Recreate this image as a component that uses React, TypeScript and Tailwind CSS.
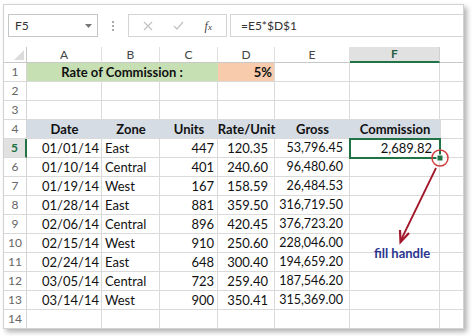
import React from "react";

const font = { fontFamily: "Lato, 'Open Sans', sans-serif" };

const data = [
  ["01/01/14", "East", "447", "120.35", "53,796.45", "2,689.82"],
  ["01/10/14", "Central", "401", "240.60", "96,480.60", ""],
  ["01/19/14", "West", "167", "158.59", "26,484.53", ""],
  ["01/28/14", "East", "881", "359.50", "316,719.50", ""],
  ["02/06/14", "Central", "896", "420.45", "376,723.20", ""],
  ["02/15/14", "West", "910", "250.60", "228,046.00", ""],
  ["02/24/14", "East", "648", "300.40", "194,659.20", ""],
  ["03/05/14", "Central", "723", "259.40", "187,546.20", ""],
  ["03/14/14", "West", "900", "350.41", "315,369.00", ""],
];

function RowHead({ n, active }: { n: number; active?: boolean }) {
  return (
    <div
      className={
        active
          ? "w-[23px] h-full flex items-center justify-center border-b border-[#dadada] border-r-2 border-r-[#217346] bg-[#e1e1e1] text-[#217346] font-bold text-[12px]"
          : "w-[23px] h-full flex items-center justify-center border-b border-r border-[#d4d4d4] border-b-[#dadada] text-[#666] text-[12px]"
      }
    >
      {n}
    </div>
  );
}

function Row({ children }: { children: React.ReactNode }) {
  return <div className="flex h-[19px] text-[13px] text-[#111] leading-none">{children}</div>;
}

const cell = "h-full flex items-center border-r border-b border-[#dadada] whitespace-nowrap";

export default function App() {
  return (
    <div className="relative w-[474px] h-[336px] bg-white overflow-hidden" style={font}>
      <div className="ml-[3px] mt-[4px] w-[461px] h-[325px] border border-[#d2d2d2] bg-white shadow-[3px_3px_5px_rgba(0,0,0,0.3)] overflow-hidden">
        {/* toolbar: name box + formula bar */}
        <div className="h-[42px] flex items-start pt-[9px] pl-[4px]">
          <div className="w-[90px] h-[23px] border border-[#c6c6c6] flex items-center justify-between pl-[6px] pr-[5px] text-[12px] text-[#333]">
            <span>F5</span>
            <svg width="7" height="4" viewBox="0 0 7 4">
              <path d="M0 0h7L3.5 4z" fill="#777" />
            </svg>
          </div>
          <div className="w-[30px] h-[23px] flex flex-col items-center justify-center gap-[2px]">
            <span className="w-[2px] h-[2px] bg-[#aaa]" />
            <span className="w-[2px] h-[2px] bg-[#aaa]" />
            <span className="w-[2px] h-[2px] bg-[#aaa]" />
          </div>
          <div className="w-[99px] h-[23px] border border-[#d4d4d4] flex items-center justify-around px-[4px]">
            <svg width="10" height="10" viewBox="0 0 10 10">
              <path d="M1 1l8 8M9 1l-8 8" stroke="#c4c4c4" strokeWidth="1.3" />
            </svg>
            <svg width="11" height="9" viewBox="0 0 11 9">
              <path d="M1 5l3 3 6-7" stroke="#c4c4c4" strokeWidth="1.3" fill="none" />
            </svg>
            <span className="italic text-[12px] text-[#444]" style={{ fontFamily: "'Liberation Serif', serif" }}>
              f<span className="text-[9px]">x</span>
            </span>
          </div>
          <div className="ml-[3px] flex-1 h-[23px] border-y border-l border-[#d4d4d4] flex items-center pl-[10px] text-[12px] text-[#333]">
            =E5*$D$1
          </div>
        </div>

        {/* column headers */}
        <div className="flex h-[16px] text-[12px] text-[#444] leading-none">
          <div className="w-[23px] h-full border-r border-b border-[#c8c8c8] flex items-end justify-end pr-[2px] pb-[2px]">
            <svg width="10" height="10" viewBox="0 0 10 10">
              <path d="M10 0V10H0z" fill="#dcdcdc" />
            </svg>
          </div>
          <div className="w-[75px] h-full flex items-center justify-center border-r border-[#e0e0e0] border-b border-b-[#c8c8c8]">A</div>
          <div className="w-[58px] h-full flex items-center justify-center border-r border-[#e0e0e0] border-b border-b-[#c8c8c8]">B</div>
          <div className="w-[58px] h-full flex items-center justify-center border-r border-[#e0e0e0] border-b border-b-[#c8c8c8]">C</div>
          <div className="w-[57px] h-full flex items-center justify-center border-r border-[#e0e0e0] border-b border-b-[#c8c8c8]">D</div>
          <div className="w-[75px] h-full flex items-center justify-center border-r border-[#e0e0e0] border-b border-b-[#c8c8c8]">E</div>
          <div className="w-[90px] h-full flex items-center justify-center bg-[#e1e1e1] border-r border-[#d0d0d0] border-b-2 border-b-[#217346] font-bold text-[#2b5d43]">F</div>
          <div className="flex-1 h-full border-b border-[#c8c8c8]" />
        </div>

        {/* row 1 */}
        <Row>
          <RowHead n={1} />
          <div className={`${cell} w-[191px] justify-center bg-[#c6e0b4] border-r-[#c6e0b4] font-bold`}>Rate of Commission :</div>
          <div className={`${cell} w-[57px] justify-end pr-[2px] bg-[#f8cbad] font-bold`}>5%</div>
          <div className={`${cell} w-[75px]`} />
          <div className={`${cell} w-[90px]`} />
          <div className={`${cell} flex-1 border-r-0`} />
        </Row>

        {/* rows 2-3 */}
        {[2, 3].map((n) => (
          <Row key={n}>
            <RowHead n={n} />
            <div className={`${cell} w-[75px]`} />
            <div className={`${cell} w-[58px]`} />
            <div className={`${cell} w-[58px]`} />
            <div className={`${cell} w-[57px]`} />
            <div className={`${cell} w-[75px]`} />
            <div className={`${cell} w-[90px]`} />
            <div className={`${cell} flex-1 border-r-0`} />
          </Row>
        ))}

        {/* row 4 headers */}
        <Row>
          <RowHead n={4} />
          <div className="w-[413px] h-full flex bg-[#d6dce4] border-b border-[#dadada] font-bold">
            <div className="w-[75px] flex items-center justify-center">Date</div>
            <div className="w-[58px] flex items-center justify-center">Zone</div>
            <div className="w-[58px] flex items-center justify-center">Units</div>
            <div className="w-[57px] flex items-center justify-center whitespace-nowrap">Rate/Unit</div>
            <div className="w-[75px] flex items-center justify-center">Gross</div>
            <div className="w-[90px] flex items-center justify-center">Commission</div>
          </div>
          <div className={`${cell} flex-1 border-l border-l-[#dadada] border-r-0`} />
        </Row>

        {/* data rows */}
        {data.map((r, i) => (
          <Row key={i}>
            <RowHead n={i + 5} active={i === 0} />
            <div className={`${cell} w-[75px] justify-end pr-[2px]`}>{r[0]}</div>
            <div className={`${cell} w-[58px] pl-[3px]`}>{r[1]}</div>
            <div className={`${cell} w-[58px] justify-end pr-[3px]`}>{r[2]}</div>
            <div className={`${cell} w-[57px] justify-end pr-[6px]`}>{r[3]}</div>
            <div className={`${cell} w-[75px] justify-end pr-[6px] text-[12.5px]`}>{r[4]}</div>
            <div className={`${cell} w-[90px] justify-end pr-[7px]`}>{r[5]}</div>
            <div className={`${cell} flex-1 border-r-0`} />
          </Row>
        ))}

        {/* row 14 */}
        <Row>
          <RowHead n={14} />
          <div className={`${cell} w-[75px]`} />
          <div className={`${cell} w-[58px]`} />
          <div className={`${cell} w-[58px]`} />
          <div className={`${cell} w-[57px]`} />
          <div className={`${cell} w-[75px]`} />
          <div className={`${cell} w-[90px]`} />
          <div className={`${cell} flex-1 border-r-0`} />
        </Row>
      </div>

      {/* selection, fill handle and callout drawn over the sheet */}
      <svg className="absolute left-0 top-0 pointer-events-none" width="474" height="336">
        <rect x="350" y="139" width="90" height="19" fill="none" stroke="#217346" strokeWidth="2" />
        <rect x="437" y="155" width="6" height="6" fill="#217346" stroke="#fff" strokeWidth="1" />
        <circle cx="440" cy="158" r="8" fill="none" stroke="#d23c3c" strokeWidth="1.5" />
        <path d="M436 168L401 240" stroke="#a3172b" strokeWidth="1.8" />
        <path d="M409 233L400.5 242L400 230" stroke="#a3172b" strokeWidth="2.2" fill="none" strokeLinejoin="miter" />
      </svg>
      <div className="absolute left-[370px] top-[247px] w-[64px] text-center text-[13px] font-bold text-[#2b3590] leading-none">
        fill handle
      </div>
    </div>
  );
}
